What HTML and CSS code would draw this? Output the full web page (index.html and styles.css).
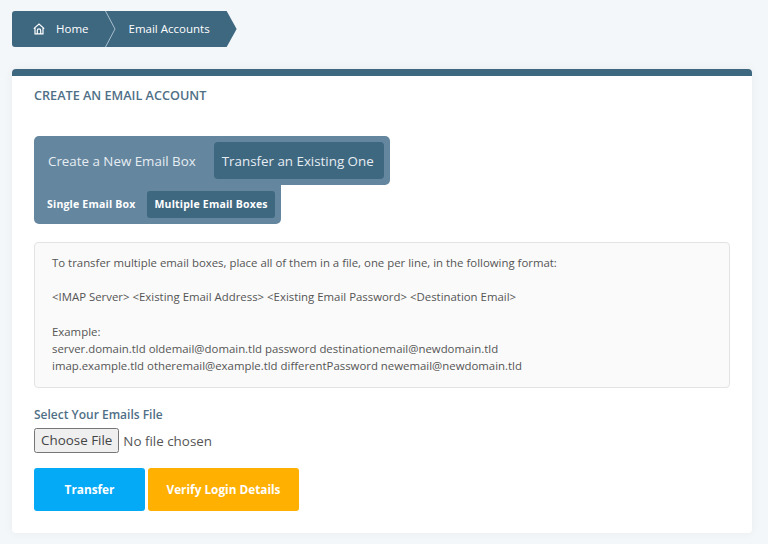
FILE: index.html
```html
<!DOCTYPE html>
<html>
<head>
	<title>Email Accounts</title>
	<link rel="stylesheet" href="styles.css">
</head>
<body>
	<div class="breadcrumb">
		<a class="crumb crumb-home">
			<svg class="home-icon" viewBox="0 0 12 12" width="12" height="12">
				<path d="M0.8 5.6 6 1l5.2 4.6M2 4.6v6.2h8V4.6M4.3 10.8V7.5a1.7 1.7 0 0 1 3.4 0v3.3" fill="none" stroke="#fff" stroke-width="1.2"/>
			</svg>
			Home
		</a>
		<svg class="crumb-sep" viewBox="0 0 11 36" width="11" height="36">
			<path d="M0.5 0 10 18 0.5 36" fill="none" stroke="#a9bfcd" stroke-width="1"/>
		</svg>
		<a class="crumb crumb-last">Email Accounts</a>
	</div>

	<div class="card">
		<h2 class="card-title">CREATE AN EMAIL ACCOUNT</h2>

		<div class="tabs">
			<div class="tab-row">
				<a class="tab">Create a New Email Box</a>
				<a class="tab active">Transfer an Existing One</a>
			</div>
		</div>
		<div class="subtabs">
			<a class="subtab">Single Email Box</a>
			<a class="subtab active">Multiple Email Boxes</a>
		</div>

		<div class="info-box">
			<p>To transfer multiple email boxes, place all of them in a file, one per line, in the following format:</p>
			<p>&lt;IMAP Server&gt; &lt;Existing Email Address&gt; &lt;Existing Email Password&gt; &lt;Destination Email&gt;</p>
			<p>Example:<br>
			server.domain.tld oldemail@domain.tld password destinationemail@newdomain.tld<br>
			imap.example.tld otheremail@example.tld differentPassword newemail@newdomain.tld</p>
		</div>

		<label class="file-label">Select Your Emails File</label>
		<input type="file" class="file-input">

		<div class="actions">
			<button class="btn btn-blue">Transfer</button>
			<button class="btn btn-orange">Verify Login Details</button>
		</div>
	</div>
</body>
</html>
```
FILE: styles.css
```css
body {
	margin: 0;
	padding: 11px 16px 11px 12px;
	background-color: #f4f7f9;
	font-family: "Open Sans", sans-serif;
	color: #555;
}

.breadcrumb {
	display: inline-flex;
	align-items: center;
	height: 36px;
	background-color: #3e6780;
	border-radius: 3px;
	clip-path: polygon(0 0, calc(100% - 10px) 0, 100% 50%, calc(100% - 10px) 100%, 0 100%);
	color: #fff;
	font-size: 11.5px;
	line-height: 34px;
	vertical-align: top;
}
.crumb {
	display: flex;
	align-items: center;
}
.crumb-home {
	padding-left: 21px;
	padding-right: 16px;
}
.home-icon {
	margin-right: 11px;
}
.crumb-last {
	padding-left: 13px;
	padding-right: 27px;
}

.card {
	margin-top: 22px;
	height: 457px;
	padding: 0 22px;
	background-color: #fff;
	border-top: 7px solid #3e6780;
	border-radius: 4px;
	box-shadow: 0 0 10px rgba(0, 0, 0, 0.05);
}
.card-title {
	margin: 0;
	padding-top: 11px;
	font-size: 12.65px;
	line-height: 17px;
	font-weight: 600;
	color: #4f6f86;
}

.tabs {
	display: inline-block;
	margin-top: 32px;
	padding: 6px;
	background-color: #64869f;
	border-radius: 5px 5px 5px 0;
	vertical-align: top;
}
.tab-row {
	display: flex;
	align-items: center;
}
.tab {
	padding: 0 9px 0 8px;
	height: 37px;
	line-height: 38px;
	font-size: 13.35px;
	color: #e6edf2;
	border-radius: 4px;
}
.tab.active {
	margin-left: 9px;
	padding-right: 10px;
	background-color: #3e6780;
}

.subtabs {
	display: flex;
	width: fit-content;
	padding: 6px;
	background-color: #64869f;
	border-radius: 0 0 5px 5px;
}
.subtab {
	padding: 0 7px;
	height: 27px;
	line-height: 27px;
	font-size: 10.5px;
	font-weight: 700;
	letter-spacing: 0.2px;
	color: #fff;
	border-radius: 3px;
}
.subtab.active {
	margin-left: 5px;
	background-color: #3e6780;
}

.info-box {
	margin-top: 18px;
	padding: 11px 17px 13px;
	background-color: #fafafa;
	border: 1px solid #e3e3e3;
	border-radius: 4px;
	font-size: 11.4px;
	line-height: 17px;
}
.info-box p {
	margin: 0 0 17.3px;
}
.info-box p:last-child {
	margin-bottom: 0;
}

.file-label {
	display: block;
	margin-top: 18px;
	font-size: 12px;
	line-height: 17px;
	font-weight: 600;
	color: #4f6f86;
}
.file-input {
	display: block;
	margin-top: 5px;
	font-family: "Open Sans", sans-serif;
	font-size: 13.4px;
	color: #555;
}
.file-input::file-selector-button {
	height: 25px;
	margin-right: 4px;
	padding: 0 5px;
	font: inherit;
	color: #444;
}

.actions {
	display: flex;
	margin-top: 15px;
	gap: 3px;
}
.btn {
	height: 43px;
	border: none;
	border-radius: 3px;
	color: #fff;
	font-family: "Open Sans", sans-serif;
	font-size: 11.8px;
	font-weight: 700;
	cursor: pointer;
}
.btn-blue {
	width: 111px;
	background-color: #05aaf7;
}
.btn-orange {
	width: 151px;
	background-color: #ffb000;
}
```
